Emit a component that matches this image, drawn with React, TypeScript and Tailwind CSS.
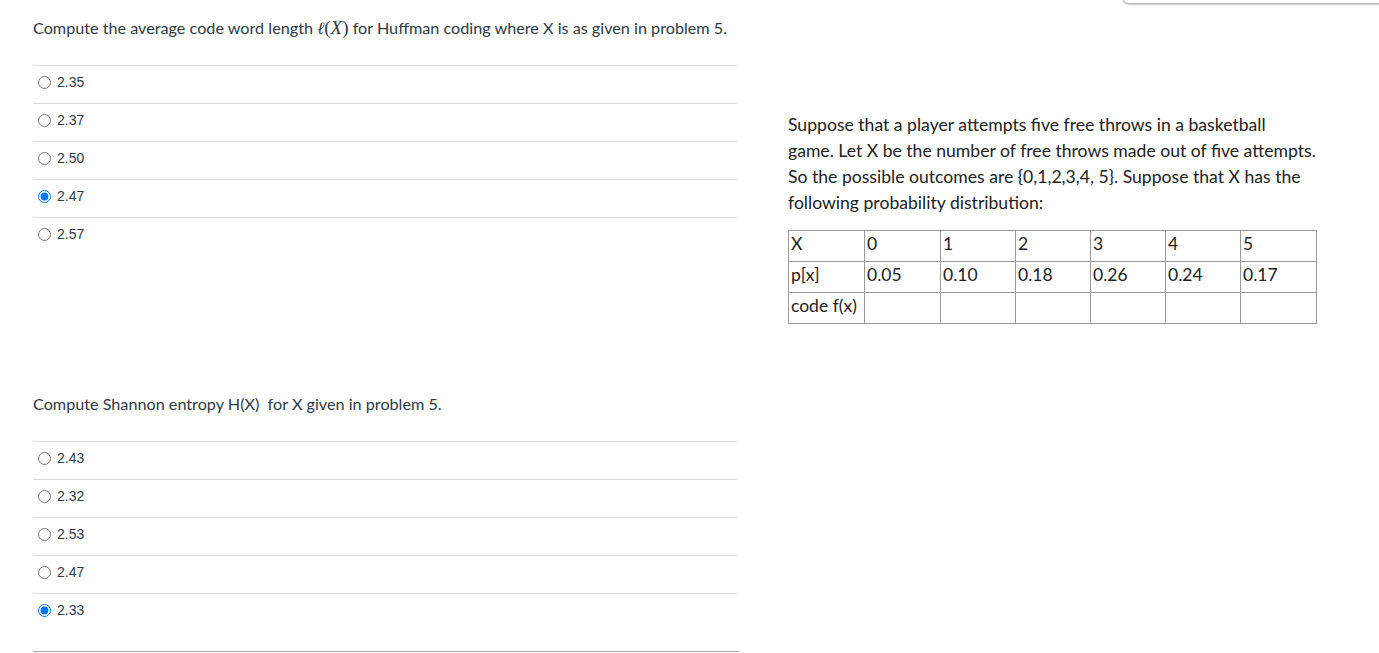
import React from 'react';

const lato = "font-['Lato','Noto_Sans',sans-serif]";

function Option({ label, checked }: { label: string; checked?: boolean }) {
  return (
    <label className="flex h-[38px] items-start border-t border-[#dddddd] pt-[7px]">
      <input
        type="radio"
        readOnly
        checked={!!checked}
        className="mt-[3px] ml-[5px] mr-[6px] h-[13px] w-[13px] accent-[#0075ff]"
      />
      <span className="font-['Liberation_Sans',Arial,sans-serif] text-[14px] leading-[18px] text-[#2d3b45]">
        {label}
      </span>
    </label>
  );
}

function Question({ title, options, picked }: { title: React.ReactNode; options: string[]; picked: number }) {
  return (
    <div>
      <div className={`${lato} text-[16.2px] leading-[20px] text-[#2d3b45]`}>{title}</div>
      <div className="mt-[27px]">
        {options.map((o, i) => (
          <Option key={o + i} label={o} checked={i === picked} />
        ))}
      </div>
    </div>
  );
}

const cols = ['X', '0', '1', '2', '3', '4', '5'];
const probs = ['p[x]', '0.05', '0.10', '0.18', '0.26', '0.24', '0.17'];
const widths = ['w-[76px]', 'w-[76px]', 'w-[75px]', 'w-[75px]', 'w-[75px]', 'w-[75px]', 'w-[76px]'];

export default function App() {
  return (
    <div className="relative h-[653px] w-[1379px] overflow-hidden bg-white">
      {/* top-right popover edge */}
      <div className="absolute right-[-6px] top-[-40px] h-[43px] w-[262px] rounded-bl-[6px] bg-white shadow-[0_1px_3px_rgba(0,0,0,0.45)]" />

      <div className="flex">
        <div className="ml-[33px] w-[704px] pt-[18px]">
          <Question
            title={
              <>
                Compute the average code word length{' '}
                <span className="font-['DejaVu_Serif','Liberation_Serif',serif] italic text-[17px]">ℓ</span>
                <span className="font-['Liberation_Serif',serif] text-[19px]">(</span>
                <span className="font-['Liberation_Serif',serif] italic text-[19px]">X</span>
                <span className="font-['Liberation_Serif',serif] text-[19px]">)</span> for Huffman coding where X is as given in
                problem 5.
              </>
            }
            options={['2.35', '2.37', '2.50', '2.47', '2.57']}
            picked={3}
          />
          <div className="mt-[139px]">
            <Question
              title={<>Compute Shannon entropy H(X)&nbsp; for X given in problem 5.</>}
              options={['2.43', '2.32', '2.53', '2.47', '2.33']}
              picked={4}
            />
          </div>
          <div className="mt-[20px] w-[706px] border-t border-[#aaaaaa]" />
        </div>

        <div className={`ml-[51px] pt-[112px] ${lato} text-[#222222]`}>
          <p className="whitespace-nowrap text-[17.6px] leading-[26px]">
            Suppose that a player attempts five free throws in a basketball
            <br />
            game. Let X be the number of free throws made out of five attempts.
            <br />
            So the possible outcomes are {'{'}0,1,2,3,4, 5{'}'}. Suppose that X has the
            <br />
            following probability distribution:
          </p>
          <table className="mt-[14px] border-collapse border border-[#333333] text-[17.5px] leading-[20px]">
            <tbody>
              {[cols, probs, ['code f(x)', '', '', '', '', '', '']].map((row, r) => (
                <tr key={r} className="h-[31px]">
                  {row.map((c, i) => (
                    <td
                      key={i}
                      className={`${widths[i]} border border-[#9a9a9a] px-[2px] pt-[3px] align-top text-left`}
                    >
                      {c}
                    </td>
                  ))}
                </tr>
              ))}
            </tbody>
          </table>
        </div>
      </div>
    </div>
  );
}
